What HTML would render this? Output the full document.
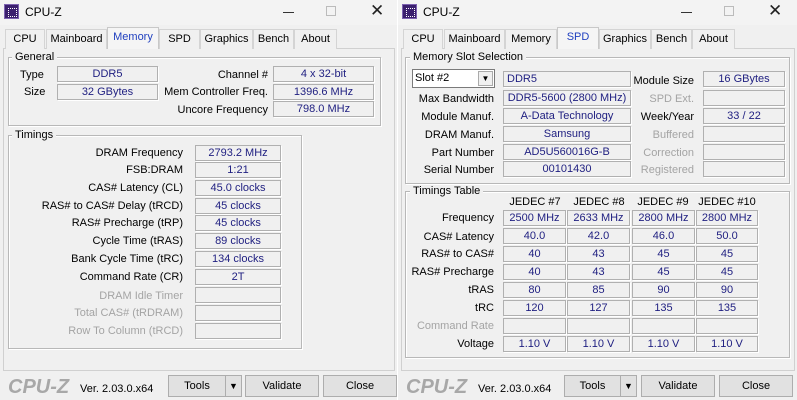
<!DOCTYPE html>
<html><head><meta charset="utf-8"><style>
*{margin:0;padding:0;box-sizing:border-box}
body{width:797px;height:400px;background:#fff;font-family:"Liberation Sans",Arial,sans-serif;font-size:11px;color:#000;position:relative;overflow:hidden}
.w{position:absolute;top:0;height:400px;background:#f0f0f0;overflow:hidden}
.w *{position:absolute}
.tb{left:0;top:0;right:0;height:25px;background:#f3f3f3}
.ic{left:4px;top:4px;width:15px;height:15px;background:#3b1f6e;border:1px solid #7d62b0}
.ic:after{content:"";position:absolute;left:3px;top:3px;width:7px;height:7px;border:1px dotted #fff}
.tt{left:25px;top:5px;font-size:12px}
.tab{top:29px;height:20px;border:1px solid #d4d4d4;border-bottom:none;background:#f0f0f0;text-align:center;line-height:19px;font-size:11px}
.tab.s{top:27px;height:22px;color:#1f3fbf;background:#f5f5f5;border-color:#c8c8c8;z-index:2}
.pn{left:3px;top:48px;width:392px;height:323px;border:1px solid #d0d0d0;background:#f0f0f0}
.g{border:1px solid #b8b8b8;box-shadow:1px 1px 0 #fff inset,1px 1px 0 #fff}
.gl{background:#f0f0f0;padding:0 3px;font-size:11px;line-height:13px}
.v{height:16px;border:1px solid #b0b0b0;text-align:center;color:#1e1e80;line-height:15px;font-size:11px;box-shadow:1px 1px 0 #fff;white-space:nowrap;overflow:hidden}
.l{text-align:right;line-height:17px;font-size:11px;white-space:nowrap}
.d{color:#a4a4a4}
.bt{top:375px;height:22px;border:1px solid #adadad;background:#e1e1e1;text-align:center;line-height:20px}
.logo{left:8px;top:376px;font-size:20px;font-weight:bold;font-style:italic;color:#a8a8a8}
.ver{left:80px;top:383px}
</style></head><body>

<!-- LEFT WINDOW -->
<div class="w" style="left:0;width:397px">
<div class="tb"></div><div class="ic"></div><div class="tt">CPU-Z</div>
<div style="left:283px;top:12px;width:11px;height:1px;background:#333"></div>
<div style="left:326px;top:6px;width:10px;height:10px;border:1px solid #bbb"></div>
<div style="left:370px;top:1px;font-size:17px;color:#222">✕</div>
<div class="pn"></div>
<div class="tab" style="left:5px;width:40px">CPU</div>
<div class="tab" style="left:46px;width:61px">Mainboard</div>
<div class="tab s" style="left:107px;width:52px">Memory</div>
<div class="tab" style="left:159px;width:41px">SPD</div>
<div class="tab" style="left:200px;width:53px">Graphics</div>
<div class="tab" style="left:253px;width:41px">Bench</div>
<div class="tab" style="left:294px;width:43px">About</div>

<div class="g" style="left:8px;top:57px;width:373px;height:69px"></div>
<div class="gl" style="left:12px;top:51px">General</div>
<div class="l" style="left:20px;top:67px">Type</div>
<div class="v" style="left:57px;top:66px;width:101px">DDR5</div>
<div class="l" style="left:24px;top:84px">Size</div>
<div class="v" style="left:57px;top:84px;width:101px">32 GBytes</div>
<div class="l" style="left:160px;top:67px;width:108px">Channel #</div>
<div class="v" style="left:273px;top:66px;width:101px">4 x 32-bit</div>
<div class="l" style="left:160px;top:84px;width:108px">Mem Controller Freq.</div>
<div class="v" style="left:273px;top:84px;width:101px">1396.6 MHz</div>
<div class="l" style="left:160px;top:102px;width:108px">Uncore Frequency</div>
<div class="v" style="left:273px;top:101px;width:101px">798.0 MHz</div>

<div class="g" style="left:8px;top:135px;width:294px;height:214px"></div>
<div class="gl" style="left:12px;top:129px">Timings</div>
<div class="l" style="left:20px;top:145px;width:163px">DRAM Frequency</div><div class="v" style="left:195px;top:145px;width:86px">2793.2 MHz</div>
<div class="l" style="left:20px;top:162px;width:163px">FSB:DRAM</div><div class="v" style="left:195px;top:162px;width:86px">1:21</div>
<div class="l" style="left:20px;top:180px;width:163px">CAS# Latency (CL)</div><div class="v" style="left:195px;top:180px;width:86px">45.0 clocks</div>
<div class="l" style="left:20px;top:198px;width:163px">RAS# to CAS# Delay (tRCD)</div><div class="v" style="left:195px;top:198px;width:86px">45 clocks</div>
<div class="l" style="left:20px;top:215px;width:163px">RAS# Precharge (tRP)</div><div class="v" style="left:195px;top:215px;width:86px">45 clocks</div>
<div class="l" style="left:20px;top:233px;width:163px">Cycle Time (tRAS)</div><div class="v" style="left:195px;top:233px;width:86px">89 clocks</div>
<div class="l" style="left:20px;top:251px;width:163px">Bank Cycle Time (tRC)</div><div class="v" style="left:195px;top:251px;width:86px">134 clocks</div>
<div class="l" style="left:20px;top:269px;width:163px">Command Rate (CR)</div><div class="v" style="left:195px;top:269px;width:86px">2T</div>
<div class="l d" style="left:20px;top:288px;width:163px">DRAM Idle Timer</div><div class="v" style="left:195px;top:287px;width:86px"></div>
<div class="l d" style="left:20px;top:305px;width:163px">Total CAS# (tRDRAM)</div><div class="v" style="left:195px;top:305px;width:86px"></div>
<div class="l d" style="left:20px;top:323px;width:163px">Row To Column (tRCD)</div><div class="v" style="left:195px;top:323px;width:86px"></div>

<div class="logo">CPU-Z</div><div class="ver">Ver. 2.03.0.x64</div>
<div class="bt" style="left:168px;width:58px">Tools</div>
<div class="bt" style="left:225px;width:17px;font-size:9px">▼</div>
<div class="bt" style="left:245px;width:74px">Validate</div>
<div class="bt" style="left:323px;width:74px">Close</div>
</div>

<!-- RIGHT WINDOW -->
<div class="w" style="left:398px;width:399px">
<div class="tb"></div><div class="ic"></div><div class="tt">CPU-Z</div>
<div style="left:283px;top:12px;width:11px;height:1px;background:#333"></div>
<div style="left:326px;top:6px;width:10px;height:10px;border:1px solid #bbb"></div>
<div style="left:370px;top:1px;font-size:17px;color:#222">✕</div>
<div class="pn" style="width:394px"></div>
<div class="tab" style="left:5px;width:40px">CPU</div>
<div class="tab" style="left:46px;width:61px">Mainboard</div>
<div class="tab" style="left:107px;width:52px">Memory</div>
<div class="tab s" style="left:159px;width:42px">SPD</div>
<div class="tab" style="left:201px;width:52px">Graphics</div>
<div class="tab" style="left:253px;width:41px">Bench</div>
<div class="tab" style="left:294px;width:43px">About</div>

<div class="g" style="left:7px;top:57px;width:385px;height:127px"></div>
<div class="gl" style="left:12px;top:51px">Memory Slot Selection</div>
<div style="left:14px;top:69px;width:83px;height:19px;border:1px solid #7a7a7a;background:#fff;line-height:17px;padding-left:2px">Slot #2</div>
<div style="left:80px;top:71px;width:15px;height:15px;border:1px solid #aaa;background:#f0f0f0;font-size:8px;text-align:center;line-height:13px">▼</div>
<div class="v" style="left:105px;top:71px;width:128px;text-align:left;padding-left:3px">DDR5</div>
<div class="l" style="left:200px;top:73px;width:96px">Module Size</div><div class="v" style="left:305px;top:71px;width:82px">16 GBytes</div>
<div class="l" style="left:10px;top:91px;width:86px">Max Bandwidth</div><div class="v" style="left:105px;top:90px;width:128px">DDR5-5600 (2800 MHz)</div>
<div class="l d" style="left:200px;top:91px;width:96px">SPD Ext.</div><div class="v" style="left:305px;top:90px;width:82px"></div>
<div class="l" style="left:10px;top:109px;width:86px">Module Manuf.</div><div class="v" style="left:105px;top:108px;width:128px">A-Data Technology</div>
<div class="l" style="left:200px;top:109px;width:96px">Week/Year</div><div class="v" style="left:305px;top:108px;width:82px">33 / 22</div>
<div class="l" style="left:10px;top:127px;width:86px">DRAM Manuf.</div><div class="v" style="left:105px;top:126px;width:128px">Samsung</div>
<div class="l d" style="left:200px;top:127px;width:96px">Buffered</div><div class="v" style="left:305px;top:126px;width:82px"></div>
<div class="l" style="left:10px;top:145px;width:86px">Part Number</div><div class="v" style="left:105px;top:144px;width:128px">AD5U560016G-B</div>
<div class="l d" style="left:200px;top:145px;width:96px">Correction</div><div class="v" style="left:305px;top:144px;width:82px"></div>
<div class="l" style="left:10px;top:162px;width:86px">Serial Number</div><div class="v" style="left:105px;top:161px;width:128px">00101430</div>
<div class="l d" style="left:200px;top:162px;width:96px">Registered</div><div class="v" style="left:305px;top:161px;width:82px"></div>

<div class="g" style="left:7px;top:191px;width:385px;height:167px"></div>
<div class="gl" style="left:12px;top:185px">Timings Table</div>
<div class="l" style="left:105px;top:194px;width:64px;text-align:center">JEDEC #7</div>
<div class="l" style="left:169px;top:194px;width:64px;text-align:center">JEDEC #8</div>
<div class="l" style="left:233px;top:194px;width:64px;text-align:center">JEDEC #9</div>
<div class="l" style="left:297px;top:194px;width:64px;text-align:center">JEDEC #10</div>

<div class="l" style="left:5px;top:210px;width:91px">Frequency</div>
<div class="v" style="left:105px;top:210px;width:63px">2500 MHz</div><div class="v" style="left:169px;top:210px;width:63px">2633 MHz</div><div class="v" style="left:234px;top:210px;width:63px">2800 MHz</div><div class="v" style="left:298px;top:210px;width:62px">2800 MHz</div>
<div class="l" style="left:5px;top:229px;width:91px">CAS# Latency</div>
<div class="v" style="left:105px;top:228px;width:63px">40.0</div><div class="v" style="left:169px;top:228px;width:63px">42.0</div><div class="v" style="left:234px;top:228px;width:63px">46.0</div><div class="v" style="left:298px;top:228px;width:62px">50.0</div>
<div class="l" style="left:5px;top:246px;width:91px">RAS# to CAS#</div>
<div class="v" style="left:105px;top:246px;width:63px">40</div><div class="v" style="left:169px;top:246px;width:63px">43</div><div class="v" style="left:234px;top:246px;width:63px">45</div><div class="v" style="left:298px;top:246px;width:62px">45</div>
<div class="l" style="left:5px;top:264px;width:91px">RAS# Precharge</div>
<div class="v" style="left:105px;top:264px;width:63px">40</div><div class="v" style="left:169px;top:264px;width:63px">43</div><div class="v" style="left:234px;top:264px;width:63px">45</div><div class="v" style="left:298px;top:264px;width:62px">45</div>
<div class="l" style="left:5px;top:282px;width:91px">tRAS</div>
<div class="v" style="left:105px;top:282px;width:63px">80</div><div class="v" style="left:169px;top:282px;width:63px">85</div><div class="v" style="left:234px;top:282px;width:63px">90</div><div class="v" style="left:298px;top:282px;width:62px">90</div>
<div class="l" style="left:5px;top:300px;width:91px">tRC</div>
<div class="v" style="left:105px;top:300px;width:63px">120</div><div class="v" style="left:169px;top:300px;width:63px">127</div><div class="v" style="left:234px;top:300px;width:63px">135</div><div class="v" style="left:298px;top:300px;width:62px">135</div>
<div class="l d" style="left:5px;top:318px;width:91px">Command Rate</div>
<div class="v" style="left:105px;top:318px;width:63px"></div><div class="v" style="left:169px;top:318px;width:63px"></div><div class="v" style="left:234px;top:318px;width:63px"></div><div class="v" style="left:298px;top:318px;width:62px"></div>
<div class="l" style="left:5px;top:336px;width:91px">Voltage</div>
<div class="v" style="left:105px;top:336px;width:63px">1.10 V</div><div class="v" style="left:169px;top:336px;width:63px">1.10 V</div><div class="v" style="left:234px;top:336px;width:63px">1.10 V</div><div class="v" style="left:298px;top:336px;width:62px">1.10 V</div>

<div class="logo">CPU-Z</div><div class="ver">Ver. 2.03.0.x64</div>
<div class="bt" style="left:166px;width:57px">Tools</div>
<div class="bt" style="left:222px;width:17px;font-size:9px">▼</div>
<div class="bt" style="left:243px;width:74px">Validate</div>
<div class="bt" style="left:321px;width:74px">Close</div>
</div>
</body></html>
